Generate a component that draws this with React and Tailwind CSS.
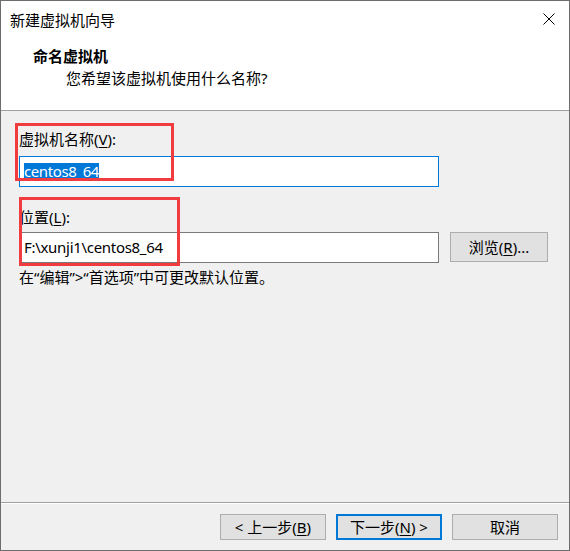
export default function App() {
  const font = "font-['Noto_Sans','Noto_Sans_CJK_SC',sans-serif]";
  return (
    <div className={`relative w-[570px] h-[551px] border border-[#6d6d6d] bg-[#f0f0f0] flex flex-col text-[15px] text-black ${font}`}>
      {/* header */}
      <div className="h-[109px] bg-white flex flex-col">
        <div className="flex items-start justify-between pl-[9px] pr-[14px] pt-[9px]">
          <span className="leading-[20px]">新建虚拟机向导</span>
          <svg width="12" height="12" viewBox="0 0 12 12" className="mt-[3px]">
            <path d="M0.5 0.5 L11.5 11.5 M11.5 0.5 L0.5 11.5" stroke="#000" strokeWidth="1" fill="none" />
          </svg>
        </div>
        <div className="pl-[32px] mt-[16px] leading-[20px] font-bold">命名虚拟机</div>
        <div className="pl-[65px] mt-[2px] leading-[20px]">您希望该虚拟机使用什么名称?</div>
      </div>
      <div className="h-px bg-[#a0a0a0]" />

      {/* content */}
      <div className="flex-1 px-[18px] flex flex-col">
        <div className="mt-[18px] leading-[20px]">
          虚拟机名称(<span className="underline underline-offset-2">V</span>):
        </div>
        <div className="mt-[7px] w-[420px] h-[31px] border border-[#0078d7] bg-white flex items-center pl-[4px]">
          <span className="bg-[#0078d7] text-white leading-[17px] tracking-[-0.4px]">centos8_64</span>
        </div>
        <div className="mt-[20px] leading-[20px]">
          位置(<span className="underline underline-offset-2">L</span>):
        </div>
        <div className="mt-[5px] flex items-start gap-[11px]">
          <div className="w-[420px] h-[31px] border border-[#7a7a7a] bg-white flex items-center pl-[4px]">
            <span className="leading-[17px] tracking-[-0.3px]">F:\xunji1\centos8_64</span>
          </div>
          <div className="w-[98px] h-[30px] border border-[#adadad] bg-[#e1e1e1] flex items-center justify-center leading-[20px]">
            浏览(<span className="underline underline-offset-2">R</span>)...
          </div>
        </div>
        <div className="mt-[4px] leading-[20px]">在“编辑”&gt;“首选项”中可更改默认位置。</div>
      </div>

      <div className="h-px bg-[#a0a0a0]" />
      <div className="h-px bg-white" />
      {/* footer */}
      <div className="h-[46px] flex justify-end items-start gap-[10px] pt-[10px] pr-[11px]">
        <div className="w-[106px] h-[26px] border border-[#adadad] bg-[#e1e1e1] flex items-center justify-center leading-[20px]">
          &lt; 上一步(<span className="underline underline-offset-2">B</span>)
        </div>
        <div className="w-[106px] h-[26px] border-2 border-[#0078d7] bg-[#e1e1e1] flex items-center justify-center leading-[20px]">
          下一步(<span className="underline underline-offset-2">N</span>) &gt;
        </div>
        <div className="w-[106px] h-[26px] border border-[#adadad] bg-[#e1e1e1] flex items-center justify-center leading-[20px]">
          取消
        </div>
      </div>

      {/* annotation boxes */}
      <div className="absolute left-[14px] top-[122px] w-[159px] h-[58px] border-[3px] border-[#f03c3f] pointer-events-none" />
      <div className="absolute left-[18px] top-[196px] w-[161px] h-[69px] border-[3px] border-[#f03c3f] pointer-events-none" />
    </div>
  );
}
